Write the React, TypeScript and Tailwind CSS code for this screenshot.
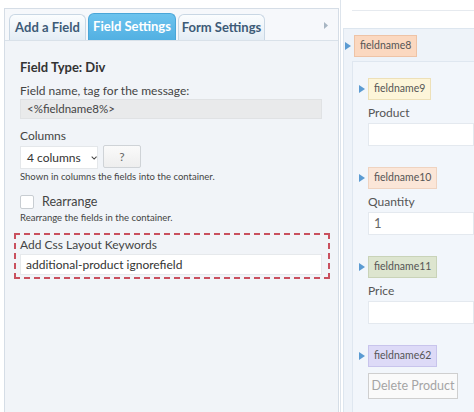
import React from 'react';

const Arrow = ({ className = '' }: { className?: string }) => (
  <svg width="6" height="8" viewBox="0 0 6 8" className={className}>
    <path d="M0 0 L6 4 L0 8 Z" fill="#5b9bd2" />
  </svg>
);

const Tag = ({ name, tone }: { name: string; tone: string }) => (
  <div className="flex items-center">
    <Arrow className="mr-[3px]" />
    <div className={`h-[22px] px-[5px] flex items-center whitespace-nowrap text-[10.5px] text-[#555] border ${tone}`}>{name}</div>
  </div>
);

const FieldBlock = ({ name, tone, label, value }: { name: string; tone: string; label: string; value?: string }) => (
  <div className="flex flex-col">
    <div className="-ml-[9px]">
      <Tag name={name} tone={tone} />
    </div>
    <div className="mt-[4px] h-[18px] leading-[18px] text-[12px] text-[#555]">{label}</div>
    <div className="mt-[1px] h-[23px] bg-white border border-[#e4e9ef] pl-[5px] text-[13px] text-[#666] leading-[21px]">{value}</div>
  </div>
);

export default function App() {
  return (
    <div className="w-[474px] h-[412px] bg-white flex overflow-hidden" style={{ fontFamily: 'Lato, "Open Sans", sans-serif' }}>
      {/* Left settings panel */}
      <div className="ml-[4px] mt-[8px] w-[335px] h-[410px] border border-[#d5dde6] bg-[#f1f4f8] flex flex-col">
        <div className="h-[32px] bg-[#f6f8fb] border-b border-[#d9e1e9] flex items-end pl-[4px] pr-[10px]">
          <div className="flex gap-[2px] items-end whitespace-nowrap">
            <div className="w-[77px] h-[26px] rounded-t-[6px] border border-b-0 border-[#c9d7e4] bg-gradient-to-b from-[#fbfdfe] to-[#e4edf5] text-[#3d5b77] font-bold text-[13px] flex items-center justify-center">
              Add a Field
            </div>
            <div className="w-[88px] h-[27px] rounded-t-[6px] border border-b-0 border-[#4aa6d8] bg-gradient-to-b from-[#6cc3ee] to-[#52b0e2] text-white font-bold text-[13px] flex items-center justify-center">
              Field Settings
            </div>
            <div className="w-[87px] h-[26px] rounded-t-[6px] border border-b-0 border-[#c9d7e4] bg-gradient-to-b from-[#fbfdfe] to-[#e4edf5] text-[#3d5b77] font-bold text-[13px] flex items-center justify-center">
              Form Settings
            </div>
          </div>
          <div className="ml-auto self-center mt-[2px]">
            <svg width="4" height="7" viewBox="0 0 4 7">
              <path d="M0 0 L4 3.5 L0 7 Z" fill="#a8b6c3" />
            </svg>
          </div>
        </div>

        <div className="pl-[15px] pr-[15px] flex flex-col text-[#444] whitespace-nowrap">
          <div className="mt-[17px] h-[18px] leading-[18px] text-[13px] font-bold text-[#333]">Field Type: Div</div>
          <div className="mt-[6px] h-[18px] leading-[18px] text-[12px]">Field name, tag for the message:</div>
          <div className="mt-[-1px] w-[302px] h-[20px] bg-[#e9eaeb] border border-[#e0e2e4] pl-[6px] text-[11.5px] leading-[18px] text-[#444]">
            &lt;%fieldname8%&gt;
          </div>
          <div className="mt-[8px] h-[18px] leading-[18px] text-[12px]">Columns</div>
          <div className="mt-[1px] flex items-start gap-[5px]">
            <div className="w-[78px] h-[23px] bg-white border border-[#e4e7ea] flex items-center pl-[6px] text-[12px] text-[#333]">
              4 columns
              <svg width="9" height="6" viewBox="0 0 9 6" className="ml-[10px]">
                <path d="M1 1 L4.5 4.5 L8 1" stroke="#444" strokeWidth="1.5" fill="none" />
              </svg>
            </div>
            <div className="-mt-[1px] w-[38px] h-[23px] rounded-[2px] border border-[#cfd3d7] bg-gradient-to-b from-[#fafafa] to-[#eeeeee] flex items-center justify-center text-[12px] text-[#666]">
              ?
            </div>
          </div>
          <div className="mt-[1px] h-[14px] leading-[14px] text-[9.5px] text-[#444]">Shown in columns the fields into the container.</div>
          <div className="mt-[11px] flex items-center gap-[8px] h-[14px]">
            <div className="w-[14px] h-[14px] bg-white border border-[#c8cdd2] rounded-[2px]" />
            <span className="text-[12.5px] text-[#444] leading-[14px]">Rearrange</span>
          </div>
          <div className="mt-[2px] h-[14px] leading-[14px] text-[9.5px] text-[#444]">Rearrange the fields in the container.</div>
          <div className="-ml-[6px] mt-[8px] w-[316px] h-[46px] border-2 border-dashed border-[#c9505e] pl-[4px] pr-[6px] flex flex-col">
            <div className="mt-[1px] h-[18px] leading-[18px] text-[12px] text-[#444]">Add Css Layout Keywords</div>
            <div className="w-[302px] h-[21px] bg-white border border-[#e6e9ec] pl-[5px] text-[12px] leading-[19px] text-[#333]">
              additional-product ignorefield
            </div>
          </div>
        </div>
      </div>

      {/* Right preview panel */}
      <div className="ml-[1px] flex-1 border-l border-[#dde4ec] flex flex-col">
        <div className="h-[28px] bg-white pl-[11px]">
          <div className="h-[11px] border-b border-[#e6eaef] bg-white" />
        </div>
        <div className="ml-[2px] flex-1 bg-[#eef3f9] border-t border-l border-[#dde6ef] flex flex-col">
          <div className="mt-[6px] ml-[1px]">
            <Tag name="fieldname8" tone="bg-[#fbd8c0] border-[#eec3a6]" />
          </div>
          <div className="ml-[8px] mt-[4px] flex-1 bg-[#f2f6fb] border-t border-l border-[#dfe7f0] pl-[15px] pt-[16px] flex flex-col">
            <FieldBlock name="fieldname9" tone="bg-[#fdf5d9] border-[#ede0b8]" label="Product" />
            <div className="mt-[21px]">
              <FieldBlock name="fieldname10" tone="bg-[#fbe6d8] border-[#efd3c0]" label="Quantity" value="1" />
            </div>
            <div className="mt-[21px]">
              <FieldBlock name="fieldname11" tone="bg-[#dde5cf] border-[#c9d3b8]" label="Price" />
            </div>
            <div className="mt-[21px] -ml-[9px]">
              <Tag name="fieldname62" tone="bg-[#dddaf7] border-[#c8c4ec]" />
            </div>
            <div className="mt-[6px] w-[90px] h-[26px] bg-[#fafafa] border border-[#cfcfcf] flex items-center justify-center whitespace-nowrap text-[12.5px] text-[#a5a5a5]">
              Delete Product
            </div>
          </div>
        </div>
      </div>
    </div>
  );
}
